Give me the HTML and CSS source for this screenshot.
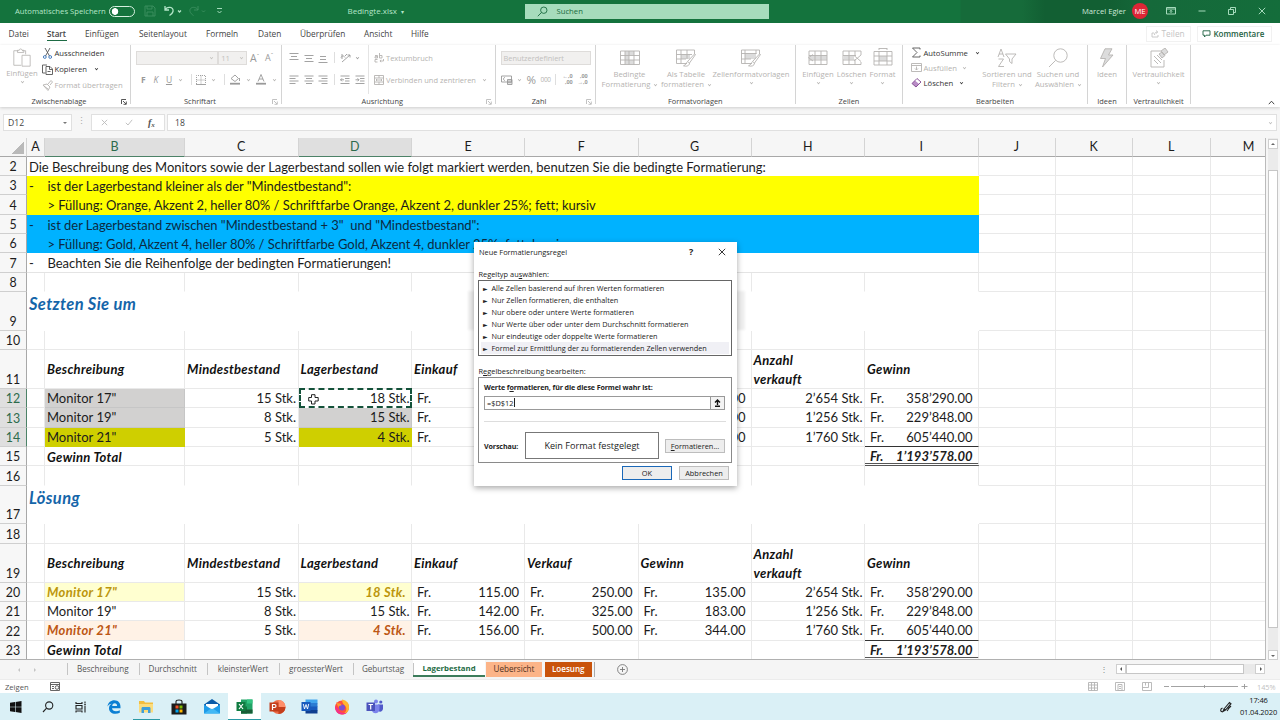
FILE: index.html
```html
<!DOCTYPE html>
<html lang="de">
<head>
    <meta charset="UTF-8">
    <meta name="viewport" content="width=device-width, initial-scale=1.0">
    <title>Bedingte.xlsx - Excel</title>
    <link rel="stylesheet" href="styles.css">
</head>
<body>
    <div class="titlebar">
        <span class="autosave">Automatisches Speichern</span>
        <span class="toggle"></span>
        <svg class="qa-save dim" width="12" height="12" viewBox="0 0 12 12"><path d="M1 1h8l2 2v8H1zM3 1v3h5V1M3 11V7h6v4"/></svg>
        <svg class="qa-undo" width="20" height="12" viewBox="0 0 20 12"><path d="M2 1v4h4M2 5c2-4 9-3.500 8 1.500C9.700 8 8 9.500 6.500 10.500M15 5.500l1.500 1.500L18 5.500"/></svg>
        <svg class="qa-redo dim" width="20" height="12" viewBox="0 0 20 12"><path d="M10 1v4H6M10 5C8 1 1 1.500 2 6.500c.3 1.500 2 3 3.500 4M14 5.500l1.500 1.500L17 5.500"/></svg>
        <svg class="qa-more" width="7" height="8" viewBox="0 0 7 8"><path d="M1 1.500h5M1.500 4l2 2 2-2"/></svg>
        <span class="doc-name">Bedingte.xlsx <small>▾</small></span>
        <div class="search">
            <svg width="11" height="11" viewBox="0 0 11 11"><circle cx="6.800" cy="4.200" r="3.200"/><path d="M4.500 6.500L.8 10.200"/></svg>
            <span>Suchen</span>
        </div>
        <span class="user">Marcel Egler</span>
        <span class="avatar">ME</span>
        <svg class="win-ribbon" width="10" height="8" viewBox="0 0 10 8"><path d="M.5.5h9v6.500h-9zM.5 2h9M5 6V3.500M3.800 4.500L5 3.300l1.200 1.200"/></svg>
        <svg class="win-min" width="8" height="8" viewBox="0 0 8 8"><path d="M.5 4h7"/></svg>
        <svg class="win-max" width="8" height="8" viewBox="0 0 8 8"><path d="M.5 2.500h5v5h-5zM2.500 2.500v-2h5v5h-2"/></svg>
        <svg class="win-close" width="8" height="8" viewBox="0 0 8 8"><path d="M.8.8l6.400 6.400M7.200.8L.8 7.200"/></svg>
    </div>

    <div class="menu">
        <span>Datei</span>
        <span class="current">Start</span>
        <span>Einfügen</span>
        <span>Seitenlayout</span>
        <span>Formeln</span>
        <span>Daten</span>
        <span>Überprüfen</span>
        <span>Ansicht</span>
        <span>Hilfe</span>
        <span class="share"><svg width="8" height="8" viewBox="0 0 8 8"><path d="M3 3H1v4h6V5M3.500 5c0-2 1-3 3-3M5 .5L6.800 2 5 3.500"/></svg>Teilen</span>
        <span class="comments"><svg width="9" height="8" viewBox="0 0 9 8"><path d="M1 .8h7v4.400H4L2.500 7V5.200H1z"/></svg>Kommentare</span>
    </div>

    <div class="ribbon">
        <div class="group g-clip">
            <div class="tools">
                <div class="big off">
                    <svg width="22" height="22" viewBox="0 0 22 22"><path d="M7 3H2v16h8M15 7V3h-4M6 2.500h2c0-2 3-2 3 0h2v2.500H6zM11 8h9v12h-9z"/></svg>
                    <span>Einfügen</span><i class="chev"></i>
                </div>
                <div class="stack">
                    <div class="cmd"><svg class="blue" width="11" height="11" viewBox="0 0 11 11"><path class="dark" d="M3 0l4.500 8M8 0L3.500 8"/><circle cx="2.800" cy="9" r="1.400"/><circle cx="8.200" cy="9" r="1.400"/></svg>Ausschneiden</div>
                    <div class="cmd"><svg width="11" height="11" viewBox="0 0 11 11"><path class="dark" d="M3.500 9H.5V1H5M4 2.500h4l2.500 2.500v5.500H4zM7.500 2.500V5.500h3M5.500 7.500h3"/></svg>Kopieren<i class="chev wide"></i></div>
                    <div class="cmd off"><svg width="11" height="11" viewBox="0 0 11 11"><path d="M1 5l4-1 3 3-2 3.500zM6 4l3-3.500 1.500 1.500L8 5M2 6l4 3"/></svg>Format übertragen</div>
                </div>
            </div>
            <div class="label">Zwischenablage<svg class="launch" width="6" height="6" viewBox="0 0 6 6"><path d="M.5 5V.5H5M2 2l3 3M5.300 2.500v2.800H2.500"/></svg></div>
        </div>

        <div class="group g-font off">
            <div class="tools column">
                <div class="line">
                    <span class="select font-name"><i class="chev"></i></span><span class="select font-size">11<i class="chev"></i></span>
                    <span class="grow">A<sup>ˆ</sup></span><span class="shrink">A<sup>ˇ</sup></span>
                </div>
                <div class="line second">
                    <b class="fmt">F</b><em class="fmt">K</em><u class="fmt">U</u><i class="chev"></i><i class="bar"></i>
                    <svg width="10" height="10" viewBox="0 0 10 10"><path stroke-dasharray="1 1" d="M.5 9V.5h9V9M5 .5V9M.5 5h9"/><path d="M0 9.500h10"/></svg><i class="chev"></i><i class="bar"></i>
                    <svg width="12" height="11" viewBox="0 0 12 11"><path d="M2 4.500L6 1l3.500 3.500L6 7.500zM10.500 4v3"/><path class="thick" d="M1 9.700h10"/></svg><i class="chev"></i>
                    <svg width="12" height="11" viewBox="0 0 12 11"><path d="M3 7.500L6 .5l3 7M4 5h4"/><path class="thick" d="M1 9.700h10"/></svg><i class="chev"></i>
                </div>
            </div>
            <div class="label">Schriftart<svg class="launch" width="6" height="6" viewBox="0 0 6 6"><path d="M.5 5V.5H5M2 2l3 3M5.300 2.500v2.800H2.500"/></svg></div>
        </div>

        <div class="group g-align off">
            <div class="tools">
                <div class="align-left">
                    <div class="line">
                        <svg width="10" height="10" viewBox="0 0 10 10"><path d="M.5.5h9M2 3.500h6M.5 6.500h9"/></svg>
                        <svg width="10" height="10" viewBox="0 0 10 10"><path d="M.5 2.500h9M2 5.500h6M.5 8.500h9"/></svg>
                        <svg width="10" height="10" viewBox="0 0 10 10"><path d="M2 3.500h6M2 6.500h6M.5 9.500h9"/></svg>
                        <i class="bar"></i>
                        <svg width="11" height="10" viewBox="0 0 11 10"><path d="M2 9l8-7M7.500 2H10v2.500"/><path d="M1 4.500l2-2 2 2M2 1v5M5 3l2-2"/></svg><i class="chev"></i>
                    </div>
                    <div class="line second">
                        <svg width="10" height="10" viewBox="0 0 10 10"><path d="M.5 1h9M.5 3.500h6M.5 6h9M.5 8.500h6"/></svg>
                        <svg width="10" height="10" viewBox="0 0 10 10"><path d="M.5 1h9M2 3.500h6M.5 6h9M2 8.500h6"/></svg>
                        <svg width="10" height="10" viewBox="0 0 10 10"><path d="M.5 1h9M3.500 3.500h6M.5 6h9M3.500 8.500h6"/></svg>
                        <i class="bar"></i>
                        <svg width="10" height="10" viewBox="0 0 10 10"><path d="M.5 1h9M5 3.500h4.500M5 6h4.500M.5 8.500h9M4 4.800H.5M2 3.300L.5 4.800 2 6.300"/></svg>
                        <svg width="10" height="10" viewBox="0 0 10 10"><path d="M.5 1h9M5 3.500h4.500M5 6h4.500M.5 8.500h9M4 4.800H.5M2.500 3.300L4 4.800 2.500 6.300"/></svg>
                    </div>
                </div>
                <div class="align-right">
                    <div class="line"><svg width="10" height="10" viewBox="0 0 10 10"><path d="M1 2.500h2.500V5H1V3.700h2.500M5.500 0v5H8V2.500H5.500M3.500 6.500H1V9h2.500M6 8h3.500V6M7 6.800L6 8l1 1.200"/></svg>Textumbruch</div>
                    <div class="line second"><svg width="10" height="10" viewBox="0 0 10 10"><path d="M.5.5h9v9h-9zM.5 3h9M.5 7h9M5 .5V3M5 7v2.500M2 5h6M3 4L2 5l1 1M7 4l1 1-1 1"/></svg>Verbinden und zentrieren<i class="chev wide"></i></div>
                </div>
            </div>
            <div class="label">Ausrichtung<svg class="launch" width="6" height="6" viewBox="0 0 6 6"><path d="M.5 5V.5H5M2 2l3 3M5.300 2.500v2.800H2.500"/></svg></div>
        </div>

        <div class="group g-num off">
            <div class="tools column">
                <div class="line"><span class="select number">Benutzerdefiniert</span></div>
                <div class="line second">
                    <svg width="12" height="10" viewBox="0 0 12 10"><path d="M.5 1h10v6H.5zM4 2.500c-2 0-2 3 0 3M6.500 4.500h4.500v5H6.500zM6.500 6h4.500M6.500 7.800h4.500"/></svg><i class="chev"></i>
                    <span class="percent">%</span><span class="thousand">000</span><i class="bar"></i>
                    <span class="decimal">←,0<br>,00</span><span class="decimal">,00<br>→,0</span>
                </div>
            </div>
            <div class="label">Zahl<svg class="launch" width="6" height="6" viewBox="0 0 6 6"><path d="M.5 5V.5H5M2 2l3 3M5.300 2.500v2.800H2.500"/></svg></div>
        </div>

        <div class="group g-styles off">
            <div class="tools">
                <div class="big w1">
                    <svg width="20" height="18" viewBox="0 0 20 18"><path class="fill" d="M5 2h9v4H5zM5 6h4v5H5zM5 11h9v4H5z"/><path d="M.5 2h19v13.500H.5zM.5 6.500h19M.5 11h19M5 2v13.500M9 2v13.500M14 2v13.500"/></svg>
                    <span>Bedingte<br>Formatierung<i class="chev"></i></span>
                </div>
                <div class="big w2">
                    <svg width="22" height="20" viewBox="0 0 22 20"><path class="fill" d="M6 6h9v5H6z"/><path d="M12 15.500H1.500V2h18v4M1.500 6.500H17M1.500 11H11M6 2v13.500M12 2v9M20.500 6.500l-6 8.500-2-1.500 7-7.500zM12.500 14c-2 .5-1 3-4 3.800 3 1 6 0 6-2.800"/></svg>
                    <span>Als Tabelle<br>formatieren<i class="chev"></i></span>
                </div>
                <div class="big w3">
                    <svg width="22" height="20" viewBox="0 0 22 20"><path class="fill" d="M5 5h11v6H5z"/><path d="M12 15.500H1.500V2h18v4M1.500 5.500h15M5 2v13.500M16 2v4M1.500 11H11M20.500 6.500l-6 8.500-2-1.500 7-7.500zM12.500 14c-2 .5-1 3-4 3.800 3 1 6 0 6-2.800"/></svg>
                    <span>Zellenformatvorlagen</span><i class="chev"></i>
                </div>
            </div>
            <div class="label">Formatvorlagen</div>
        </div>

        <div class="group g-cells off">
            <div class="tools">
                <div class="big w4">
                    <svg width="22" height="18" viewBox="0 0 22 18"><path class="fill" d="M3 6.500h17v4H3z"/><path d="M2 2h18v13.500H2zM2 6.500h18M2 11h18M8 2v13.500M14 2v13.500M6 5.500L1.500 8.700 6 12"/></svg>
                    <span>Einfügen</span><i class="chev"></i>
                </div>
                <div class="big w5">
                    <svg width="22" height="18" viewBox="0 0 22 18"><path class="fill" d="M3 6.500h10v4H3z"/><path d="M20 6V2H2v13.500h18V13M2 6.500h13M2 11h13M8 2v13.500M14 2v4M14 12v3.500M13 6.500l7 6M20 6l-7 6"/></svg>
                    <span>Löschen</span><i class="chev"></i>
                </div>
                <div class="big w6">
                    <svg width="20" height="20" viewBox="0 0 20 20"><path class="fill" d="M6 8h8v5H6z"/><path d="M1 3.500h18V17H1zM1 8h18M1 13h18M6 3.500V17M14 3.500V17M6 .5h8M6 0v2M14 0v2"/></svg>
                    <span>Format</span><i class="chev"></i>
                </div>
            </div>
            <div class="label">Zellen</div>
        </div>

        <div class="group g-edit">
            <div class="tools">
                <div class="stack">
                    <div class="cmd"><svg width="11" height="11" viewBox="0 0 11 11"><path class="dark" d="M9 2.500V1H1.500L6 5.500 1.500 10H9V8.500"/></svg>AutoSumme<i class="chev wide"></i></div>
                    <div class="cmd off"><svg width="11" height="9" viewBox="0 0 11 9"><path d="M.5.5h10v8H.5zM.5 2.500h10M5.500 3.500V7M4 5.500L5.500 7 7 5.500"/></svg>Ausfüllen<i class="chev"></i></div>
                    <div class="cmd"><svg width="11" height="10" viewBox="0 0 11 10"><path class="purple" d="M1 5.500l3-3L8 6 5 9z"/><path class="purple-line" d="M1 5.500L6 .5 10 4 5 9z"/></svg>Löschen<i class="chev"></i></div>
                </div>
                <div class="big w7 off">
                    <svg width="20" height="20" viewBox="0 0 20 20"><path d="M1 9l3-8 3 8M2 6h4M1.500 11h5l-5 7.500h5.500M8.500 6h10.500l-4 5v4.500l-2.500-2V11z"/></svg>
                    <span>Sortieren und<br>Filtern<i class="chev"></i></span>
                </div>
                <div class="big w8 off">
                    <svg width="20" height="20" viewBox="0 0 20 20"><circle cx="12.500" cy="7.500" r="6.700"/><path d="M7.700 12.300L1 19"/></svg>
                    <span>Suchen und<br>Auswählen<i class="chev"></i></span>
                </div>
            </div>
            <div class="label">Bearbeiten</div>
        </div>

        <div class="group g-ideas off">
            <div class="tools">
                <div class="big">
                    <svg width="18" height="20" viewBox="0 0 18 20"><path class="fill outline" d="M7 .8h7L10.500 7H15L4.500 19l3-8.500H2.500z"/></svg>
                    <span>Ideen</span>
                </div>
            </div>
            <div class="label">Ideen</div>
        </div>

        <div class="group g-trust off">
            <div class="tools">
                <div class="big">
                    <svg width="20" height="20" viewBox="0 0 20 20"><path d="M12 3H2v16h13v-7"/><path class="fill outline" d="M12 3l4-3 3 4-4 3zM10 6l3-2 3 3.500-3 2.500z"/><path class="hatch" d="M5 8l7 7M5 12l4 4M8 7l5 5"/></svg>
                    <span>Vertraulichkeit</span><i class="chev"></i>
                </div>
            </div>
            <div class="label">Vertraulichkeit</div>
        </div>
        <svg class="collapse" width="7" height="5" viewBox="0 0 7 5"><path d="M.8 4.200l2.700-3 2.700 3"/></svg>
    </div>

    <div class="formula-bar">
        <div class="name-box"><span>D12</span><i class="tri"></i></div>
        <i class="grip">⋮</i>
        <div class="formula-buttons">
            <svg width="7" height="7" viewBox="0 0 7 7"><path d="M.8.8l5.400 5.400M6.200.8L.8 6.200"/></svg>
            <svg width="8" height="7" viewBox="0 0 8 7"><path d="M.8 3.800L3 6 7.200.8"/></svg>
            <span class="fx">f<sub>x</sub></span>
        </div>
        <div class="formula-input"><span>18</span><i class="chev"></i></div>
    </div>

    <div class="workarea">
        <div class="sheet">
            <div class="head corner"></div><div class="head">A</div><div class="head sel">B</div><div class="head">C</div><div class="head sel">D</div><div class="head">E</div><div class="head">F</div><div class="head">G</div><div class="head">H</div><div class="head">I</div><div class="head">J</div><div class="head">K</div><div class="head">L</div><div class="head">M</div>

            <div class="row">2</div><div class="wide-cell">Die Beschreibung des Monitors sowie der Lagerbestand sollen wie folgt markiert werden, benutzen Sie die bedingte Formatierung:</div><div></div><div></div><div></div><div></div>
            <div class="row">3</div><div class="wide-cell yellow"><span class="dash">-</span>ist der Lagerbestand kleiner als der "Mindestbestand":</div><div></div><div></div><div></div><div></div>
            <div class="row">4</div><div class="wide-cell yellow"><span class="dash"></span>&gt; Füllung: Orange, Akzent 2, heller 80% / Schriftfarbe Orange, Akzent 2, dunkler 25%; fett; kursiv</div><div></div><div></div><div></div><div></div>
            <div class="row">5</div><div class="wide-cell sky"><span class="dash">-</span>ist der Lagerbestand zwischen "Mindestbestand + 3"&nbsp; und "Mindestbestand":</div><div></div><div></div><div></div><div></div>
            <div class="row">6</div><div class="wide-cell sky"><span class="dash"></span>&gt; Füllung: Gold, Akzent 4, heller 80% / Schriftfarbe Gold, Akzent 4, dunkler 25%; fett; kursiv</div><div></div><div></div><div></div><div></div>
            <div class="row">7</div><div class="wide-cell line-below"><span class="dash">-</span>Beachten Sie die Reihenfolge der bedingten Formatierungen!</div><div></div><div></div><div></div><div></div>
            <div class="row">8</div><div class="open"></div><div class="open"></div><div class="open"></div><div class="open"></div><div class="open"></div><div class="open"></div><div class="open"></div><div class="open"></div><div class="open"></div><div></div><div></div><div></div><div></div>
            <div class="row">9</div><div class="wide-cell title">Setzten Sie um</div><div></div><div></div><div></div><div></div>
            <div class="row">10</div><div></div><div></div><div></div><div></div><div></div><div></div><div></div><div></div><div></div><div></div><div></div><div></div><div></div>
            <div class="row">11</div><div></div><div class="th">Beschreibung</div><div class="th">Mindestbestand</div><div class="th">Lagerbestand</div><div class="th">Einkauf</div><div class="th">Verkauf</div><div class="th">Gewinn</div><div class="th">Anzahl<br>verkauft</div><div class="th">Gewinn</div><div></div><div></div><div></div><div></div>
            <div class="row sel">12</div><div></div><div class="gray">Monitor 17"</div><div class="num">15 Stk.</div><div class="num copied">18 Stk.<svg class="cursor" width="11" height="11" viewBox="0 0 11 11"><path d="M3.500.7h3.500v2.800h3.200v3.500H7v3H3.500V7H.7V3.500h2.800z"/></svg></div><div class="money"><span>Fr.</span><span>115.00</span></div><div class="money"><span>Fr.</span><span>250.00</span></div><div class="money"><span>Fr.</span><span>135.00</span></div><div class="num">2’654 Stk.</div><div class="money"><span>Fr.</span><span>358’290.00</span></div><div></div><div></div><div></div><div></div>
            <div class="row sel">13</div><div></div><div class="gray">Monitor 19"</div><div class="num">8 Stk.</div><div class="num gray">15 Stk.</div><div class="money"><span>Fr.</span><span>142.00</span></div><div class="money"><span>Fr.</span><span>325.00</span></div><div class="money"><span>Fr.</span><span>183.00</span></div><div class="num">1’256 Stk.</div><div class="money"><span>Fr.</span><span>229’848.00</span></div><div></div><div></div><div></div><div></div>
            <div class="row sel">14</div><div></div><div class="olive">Monitor 21"</div><div class="num">5 Stk.</div><div class="num olive">4 Stk.</div><div class="money"><span>Fr.</span><span>156.00</span></div><div class="money"><span>Fr.</span><span>500.00</span></div><div class="money"><span>Fr.</span><span>344.00</span></div><div class="num">1’760 Stk.</div><div class="money sum-above"><span>Fr.</span><span>605’440.00</span></div><div></div><div></div><div></div><div></div>
            <div class="row">15</div><div></div><div class="th">Gewinn Total</div><div></div><div></div><div></div><div></div><div></div><div></div><div class="money total"><span>Fr.</span><span>1’193’578.00</span></div><div></div><div></div><div></div><div></div>
            <div class="row">16</div><div class="open"></div><div class="open"></div><div class="open"></div><div class="open"></div><div class="open"></div><div class="open"></div><div class="open"></div><div class="open"></div><div class="open"></div><div></div><div></div><div></div><div></div>
            <div class="row">17</div><div class="wide-cell title">Lösung</div><div></div><div></div><div></div><div></div>
            <div class="row">18</div><div></div><div></div><div></div><div></div><div></div><div></div><div></div><div></div><div></div><div></div><div></div><div></div><div></div>
            <div class="row">19</div><div></div><div class="th">Beschreibung</div><div class="th">Mindestbestand</div><div class="th">Lagerbestand</div><div class="th">Einkauf</div><div class="th">Verkauf</div><div class="th">Gewinn</div><div class="th">Anzahl<br>verkauft</div><div class="th">Gewinn</div><div></div><div></div><div></div><div></div>
            <div class="row">20</div><div></div><div class="gold">Monitor 17"</div><div class="num">15 Stk.</div><div class="num gold">18 Stk.</div><div class="money"><span>Fr.</span><span>115.00</span></div><div class="money"><span>Fr.</span><span>250.00</span></div><div class="money"><span>Fr.</span><span>135.00</span></div><div class="num">2’654 Stk.</div><div class="money"><span>Fr.</span><span>358’290.00</span></div><div></div><div></div><div></div><div></div>
            <div class="row">21</div><div></div><div>Monitor 19"</div><div class="num">8 Stk.</div><div class="num">15 Stk.</div><div class="money"><span>Fr.</span><span>142.00</span></div><div class="money"><span>Fr.</span><span>325.00</span></div><div class="money"><span>Fr.</span><span>183.00</span></div><div class="num">1’256 Stk.</div><div class="money"><span>Fr.</span><span>229’848.00</span></div><div></div><div></div><div></div><div></div>
            <div class="row">22</div><div></div><div class="orange">Monitor 21"</div><div class="num">5 Stk.</div><div class="num orange">4 Stk.</div><div class="money"><span>Fr.</span><span>156.00</span></div><div class="money"><span>Fr.</span><span>500.00</span></div><div class="money"><span>Fr.</span><span>344.00</span></div><div class="num">1’760 Stk.</div><div class="money sum-above"><span>Fr.</span><span>605’440.00</span></div><div></div><div></div><div></div><div></div>
            <div class="row">23</div><div></div><div class="th">Gewinn Total</div><div></div><div></div><div></div><div></div><div></div><div></div><div class="money total"><span>Fr.</span><span>1’193’578.00</span></div><div></div><div></div><div></div><div></div>
        </div>
        <div class="vscroll">
            <i class="arrow up"></i>
            <i class="thumb"></i>
            <i class="arrow down"></i>
        </div>
    </div>

    <div class="tabs">
        <span class="nav"><i class="tri-left"></i><i class="tri-right"></i></span>
        <span class="tab">Beschreibung</span>
        <span class="tab">Durchschnitt</span>
        <span class="tab">kleinsterWert</span>
        <span class="tab">groessterWert</span>
        <span class="tab">Geburtstag</span>
        <span class="tab active">Lagerbestand</span>
        <span class="tab peach">Uebersicht</span>
        <span class="tab rust">Loesung</span>
        <span class="add"><svg width="11" height="11" viewBox="0 0 11 11"><circle cx="5.500" cy="5.500" r="4.900"/><path d="M5.500 3v5M3 5.500h5"/></svg></span>
        <span class="split">⋮</span>
        <div class="hscroll"><i class="arrow left"></i><i class="thumb"></i><i class="arrow right"></i></div>
    </div>

    <div class="status">
        <span class="mode">Zeigen</span>
        <svg width="10" height="9" viewBox="0 0 10 9"><path class="dark" d="M.5.5h9v8h-9zM.5 2.500h9M2 4.500h2M2 6.500h2"/><circle class="dark" cx="7" cy="5.500" r="1.800"/></svg>
        <div class="views">
            <svg width="10" height="9" viewBox="0 0 10 9"><path d="M.5.5h9v8h-9zM.5 3h9M.5 6h9M3.500.5v8M6.500.5v8"/></svg>
            <svg width="10" height="9" viewBox="0 0 10 9"><path d="M.5.5h9v8h-9zM3 2.500h4v6H3zM4 4.500h2M4 6.500h2"/></svg>
            <svg width="10" height="9" viewBox="0 0 10 9"><path d="M.5.5h9v8h-9zM.5 5.500h6v-5M3.500.5v3"/></svg>
        </div>
        <svg class="zoom" width="87" height="9" viewBox="0 0 87 9"><path d="M1 4.500h5M8 4.500h67M41.500 3v3M78.500 4.500h6M81.500 2v5"/></svg>
        <span class="percentage">145%</span>
    </div>

    <div class="taskbar">
        <svg width="12" height="12" viewBox="0 0 12 12"><path fill="#111" d="M0 1.800l5-.8v4.700H0zM5.600.9L11.500 0v5.700H5.600zM0 6.300h5V11l-5-.8zM5.600 6.300h5.900V12l-5.900-.9z"/></svg>
        <svg width="12" height="12" viewBox="0 0 12 12"><circle class="stroke" cx="7.200" cy="4.500" r="3.600"/><path class="stroke" d="M4.600 7.200L1 11"/></svg>
        <svg width="12" height="12" viewBox="0 0 12 12"><path class="stroke" d="M1 1v1.500h6V1M1 4.500h6v3.500H1zM1 11.500V10h6v1.500M10 .5v2M10 5v6.500M9 3.700h2"/></svg>
        <svg width="14" height="14" viewBox="0 0 14 14"><path fill="#0b7fd3" d="M.5 6.500C1 2.500 4 .3 7.300.3c4 0 6.200 2.800 6.200 6.700v1.300H5c.2 2 1.800 2.900 4 2.900 1.500 0 2.700-.4 3.800-1v2.600c-1.200.7-2.700 1-4.400 1-3.700 0-6.400-2-6.400-5.500C2 6.200 3 4.600 4.800 3.700 2.800 3.800 1.300 5 .5 6.500zM5.200 6h4.900c0-1.700-.9-2.700-2.400-2.700S5.400 4.300 5.200 6z"/></svg>
        <span class="app running"><svg width="16" height="13" viewBox="0 0 16 13"><path fill="#f2bd3f" d="M1 1h5l1 1.500h8V12H1z"/><path fill="#fbdc7c" d="M1 4h14v8.500H1z"/><path fill="#3d9edb" d="M3.500 13V8.500c0-1 .5-1.500 1.500-1.500h6c1 0 1.500.5 1.500 1.500V13H10v-3H6v3z"/></svg></span>
        <svg width="16" height="16" viewBox="0 0 16 16"><path class="stroke" d="M5 5V2.500C5 .5 11 .5 11 2.500V5"/><path fill="#1b1b1b" d="M.5 4.500h15v11H.5z"/><path fill="#f05024" d="M4.500 6.500h3v3h-3z"/><path fill="#7fb900" d="M8.500 6.500h3v3h-3z"/><path fill="#00a3ee" d="M4.500 10.500h3v3h-3z"/><path fill="#ffb800" d="M8.500 10.500h3v3h-3z"/></svg>
        <svg width="16" height="15" viewBox="0 0 16 15"><path fill="#0a5aa8" d="M0 5.500L8 0l8 5.500V9H0z"/><path fill="#fff" d="M2 5h12v5H2z"/><path fill="#1e9be8" d="M0 5.500l8 5 8-5V14.500H0z"/><path fill="#42b8f5" d="M0 14.500l7-5 1 .7 1-.7 7 5z"/></svg>
        <span class="app focused"><svg width="17" height="15" viewBox="0 0 17 15"><path fill="#21a366" d="M5 .5h11.500v14H5z"/><path fill="#107c41" d="M5 7.500h6v7H5z"/><path fill="#185c37" d="M5 10.500h11.500v4H5z"/><path fill="#33c481" d="M11 .5h5.500v4H11z"/><path fill="#107c41" d="M.5 3h9v9h-9z"/><path stroke="#fff" stroke-width="1.200" d="M3 5l4 5M7 5l-4 5"/></svg></span>
        <svg width="17" height="16" viewBox="0 0 17 16"><circle cx="9.500" cy="8" r="7" fill="#ed6c47"/><path fill="#ff8f6b" d="M9.500 1a7 7 0 0 1 7 7h-7z"/><path fill="#c43e1c" d="M.5 3.500h9v9h-9zM9.500 8h7a7 7 0 0 1-7 7z"/><path stroke="#fff" stroke-width="1.200" fill="none" d="M3.500 11V5.500h2c2 0 2 3 0 3h-2"/></svg>
        <svg width="17" height="15" viewBox="0 0 17 15"><path fill="#41a5ee" d="M4.500.5h12v4h-12z"/><path fill="#2b7cd3" d="M4.500 4h12v4h-12z"/><path fill="#185abd" d="M4.500 7.500h12v4h-12z"/><path fill="#103f91" d="M4.500 11h12v3.500h-12z"/><path fill="#185abd" d="M.5 3h9v9h-9z"/><path stroke="#fff" fill="none" d="M2.300 5l1.200 5L5 5.500 6.500 10l1.200-5"/></svg>
        <svg width="16" height="16" viewBox="0 0 16 16"><circle cx="8" cy="8.500" r="7" fill="#ff4f3d"/><path fill="#ffb52e" d="M8 .5c5 1 7.500 4 7 8.500-.5 4-3.500 6.500-7 6.500 4-2 5-4.500 4-7.500C11 6 8 5 8 .5z"/><path fill="#f3318b" d="M1 7c0 5 3 8.500 7 8.500 2.500 0 4-1 5-2-4 1.500-8 0-9-4z"/><circle cx="8" cy="8.500" r="3" fill="#7a4fd0"/><path fill="#ff9b2e" d="M2 3l2 1.500C6 4 7 5 7.500 6.500c-2-.2-3 .5-3 2z"/></svg>
        <svg width="18" height="15" viewBox="0 0 18 15"><circle cx="10" cy="2.500" r="2" fill="#7b83eb"/><circle cx="14.800" cy="3" r="1.600" fill="#5059c9"/><path fill="#5059c9" d="M12 5.500h5v4c0 2.500-2 3.500-4 3z"/><path fill="#7b83eb" d="M6 5.500h7.500V10c0 5.500-7.500 5.500-7.500 1z"/><path fill="#4b53bc" d="M.5 3.500h8.500V12H.5z"/><path stroke="#fff" stroke-width="1.200" d="M2.500 5.500H7M4.700 5.500v5"/></svg>
        <span></span>
        <svg width="12" height="12" viewBox="0 0 12 12"><path class="stroke" d="M4 8l5.500-6.500 1.500 1.200L5.500 9zM4 8L3 10.500 5.500 9M2.500 7C0 8 0 11 3 10.800M8 8l3-3M7 10l1.500-2"/></svg>
        <div class="clock">17:46<br>01.04.2020</div>
    </div>

    <div class="ghost"></div>
    <div class="dialog">
        <div class="dialog-title"><span>Neue Formatierungsregel</span><b>?</b><svg width="8" height="8" viewBox="0 0 8 8"><path d="M.8.8l6.400 6.400M7.200.8L.8 7.200"/></svg></div>
        <div class="caption">Regeltyp au<u>s</u>wählen:</div>
        <ul class="rules">
            <li>Alle Zellen basierend auf ihren Werten formatieren</li>
            <li>Nur Zellen formatieren, die enthalten</li>
            <li>Nur obere oder untere Werte formatieren</li>
            <li>Nur Werte über oder unter dem Durchschnitt formatieren</li>
            <li>Nur eindeutige oder doppelte Werte formatieren</li>
            <li class="chosen">Formel zur Ermittlung der zu formatierenden Zellen verwenden</li>
        </ul>
        <div class="caption edit">R<u>e</u>gelbeschreibung bearbeiten:</div>
        <div class="description">
            <b class="hint">Werte f<u>o</u>rmatieren, für die diese Formel wahr ist:</b>
            <div class="ref-input"><span>=$D$12</span><i class="ref-button"><svg width="7" height="8" viewBox="0 0 7 8"><path d="M3.500 6V1M1 3.500L3.500 1 6 3.500M1 7.300h5"/></svg></i></div>
            <div class="preview">
                <b>Vorschau:</b>
                <div class="preview-box">Kein Format festgelegt</div>
                <span class="button"><u>F</u>ormatieren...</span>
            </div>
        </div>
        <div class="dialog-buttons"><span class="button ok">OK</span><span class="button">Abbrechen</span></div>
    </div>
</body>
</html>
```

FILE: styles.css
```css
* {
    margin: 0;
    padding: 0;
    box-sizing: border-box;
}

body {
    width: 1280px;
    height: 720px;
    overflow: hidden;
    display: flex;
    flex-direction: column;
    position: relative;
    background: #f6f6f6;
    color: #444;
    font-family: "Open Sans", "Noto Sans", sans-serif;
    font-size: 7.7px;
    line-height: 10px;
    white-space: nowrap;
}

svg {
    display: block;
    flex: none;
    fill: none;
    stroke: currentColor;
    stroke-width: 0.9;
}

i {
    font-style: normal;
}

/* Title bar */
.titlebar {
    height: 22.5px;
    flex: none;
    display: flex;
    align-items: center;
    padding-left: 15px;
    background: linear-gradient(90deg, #14733d 0, #14733d 960px, #166b3a 961px, #166b3a 1022px, #125f33 1045px, #125f33 1110px, #15693a 1150px, #146d3b 100%);
    color: #b4e6c9;
}

.autosave {
    width: 94px;
}

.toggle {
    width: 26px;
    height: 11px;
    border: 1px solid #d5f0df;
    border-radius: 6px;
    background: radial-gradient(circle at 5px 4.5px, #fff 3px, transparent 3.6px);
}

.dim { opacity: 0.25; }
.qa-save { margin-left: 9px; }
.qa-undo { margin-left: 7px; stroke-width: 1.3; }
.qa-redo { margin-left: 5px; }
.qa-more { margin-left: 8px; }

.doc-name {
    margin-left: 124.5px;
    width: 177px;
    font-size: 8px;
}

.doc-name small {
    margin-left: 2px;
    font-size: 6px;
}

.search {
    width: 244.5px;
    height: 15px;
    display: flex;
    align-items: center;
    gap: 9px;
    padding-left: 12px;
    background: #a6dcbc;
    color: #1b6b40;
}

.user {
    margin: 0 6px 0 307px;
    width: 50px;
    text-align: right;
    color: #cfe9da;
}

.avatar {
    width: 16px;
    height: 16px;
    line-height: 16px;
    border-radius: 8px;
    background: #dc2636;
    color: #fff;
    text-align: center;
}

.win-ribbon { margin-left: 18px; }
.win-min { margin-left: 22px; }
.win-max { margin-left: 22px; }
.win-close { margin-left: 22px; }

/* Menu */
.menu {
    height: 22.5px;
    flex: none;
    display: grid;
    grid-template-columns: 38.5px 38px 54px 67px 52px 42px 64px 47px 734.5px 51px 75px;
    align-items: center;
    padding-left: 8.5px;
    background: #fff;
    font-size: 8.3px;
}

.current {
    align-self: start;
    width: 20px;
    height: 18.5px;
    line-height: 21px;
    border-bottom: 1.5px solid #1d6b44;
    font-weight: 600;
    font-size: 8.1px;
}

.share,
.comments {
    display: flex;
    align-items: center;
    gap: 3px;
    height: 16px;
    width: 45px;
    padding-left: 4px;
    border: 1px solid #f1f1f1;
    color: #c4c4c4;
}

.comments {
    width: 75px;
    color: #1d6142;
    font-weight: 600;
    font-size: 8px;
}

/* Ribbon */
.ribbon {
    height: 62px;
    flex: none;
    display: flex;
    background: #fff;
    box-shadow: 0 1px 3px #ccc;
    position: relative;
}

.group {
    display: flex;
    flex-direction: column;
    height: 59px;
    border-right: 1px solid #d4d4d4;
}

.g-clip { width: 131px; }
.g-font { width: 151px; }
.g-align { width: 213.5px; }
.g-num { width: 100px; }
.g-styles { width: 200.5px; }
.g-cells { width: 107px; }
.g-edit { width: 185px; }
.g-ideas { width: 39px; }
.g-trust { width: 64px; }

.off {
    color: #b5b3b1;
}

.tools {
    height: 50.5px;
    flex: none;
    display: flex;
}

.tools.column {
    flex-direction: column;
}

.label {
    position: relative;
    color: #444;
    font-size: 7.4px;
    line-height: 11px;
    text-align: center;
}

.g-clip .label,
.g-font .label,
.g-align .label,
.g-num .label {
    padding-right: 12px;
}

.launch {
    position: absolute;
    right: 3px;
    top: 3px;
}

.off .launch { color: #bbb; }

.big {
    width: 40px;
    padding-top: 3px;
    display: flex;
    flex-direction: column;
    align-items: center;
    text-align: center;
    line-height: 10.5px;
}

.big svg {
    height: 20px;
    margin-bottom: 1.5px;
}

.fill {
    fill: #dcdcdc;
    stroke: none;
}

.outline { stroke: currentColor; }

.chev {
    flex: none;
    display: inline-block;
    width: 3px;
    height: 3px;
    margin: 0 4px 1px 5px;
    border-right: 0.8px solid currentColor;
    border-bottom: 0.8px solid currentColor;
    transform: rotate(45deg) scale(0.8);
}

.chev.wide { margin-left: 7px; }
.big .chev { margin-right: 0; margin-left: 4px; }
.big > .chev { margin: 2px 0 0; }

.stack {
    display: flex;
    flex-direction: column;
}

.cmd {
    height: 16px;
    display: flex;
    align-items: center;
    gap: 1.5px;
}

.g-clip .big { width: 42px; padding-left: 2px; }
.g-clip .big span { margin-top: -2px; }
.cmd:not(.off) { color: #333; }
.blue { stroke: #3571b5; }
.dark { stroke: #555; }
.purple { fill: #b98cc6; stroke: none; }
.purple-line { stroke: #80488f; }

.line {
    height: 20px;
    display: flex;
    align-items: center;
    padding-top: 5px;
}

.line.second {
    height: 23px;
    padding-top: 6px;
}

.select {
    height: 14px;
    display: flex;
    align-items: center;
    justify-content: flex-end;
    background: #f1f0ef;
    border: 1px solid #dedcda;
    color: #c2c0be;
}

.g-font .line { padding-left: 5px; }
.font-name { width: 82px; }
.font-size { width: 29px; }
.font-size .chev { margin: 0 3px 0 10px; }
.grow, .shrink { width: 15px; padding-left: 3px; font-size: 10.5px; color: #999; }
.shrink { font-size: 9px; }
.grow sup, .shrink sup { font-size: 6px; line-height: 4px; }
.fmt { width: 14.5px; padding-left: 5px; font-size: 8.5px; color: #999; }
.g-font .second .chev { margin: 0 5px 0 6px; }
.g-font .second .fmt + .chev { margin-left: 6px; }
.g-font .second svg { color: #999; }
.thick { stroke-width: 1.8; }

.bar {
    width: 1px;
    height: 11px;
    background: #dedede;
    margin: 0 4px;
}

.align-left {
    width: 87px;
    padding-left: 7px;
    height: 49px;
    border-right: 1px solid #e4e4e4;
}

.align-left .line { gap: 4.5px; color: #999; }
.align-left .bar { margin: 0 1px; }
.align-left .chev { margin: 0; }
.align-right { padding-left: 5px; }
.align-right .line { gap: 2px; font-size: 7.5px; }
.align-right .chev { margin-left: 5px; }

.g-num .line { padding-left: 5px; }
.number { width: 90px; justify-content: flex-start; padding-left: 2px; font-size: 7.4px; }
.g-num .chev { margin: 0 6px 0 5px; }
.percent { width: 14px; font-size: 11.5px; color: #999; }
.thousand { font-size: 6.5px; letter-spacing: -0.3px; }
.g-num .bar { margin: 0 2px 0 4px; }
.decimal { width: 15px; font-size: 5.5px; line-height: 5.5px; text-align: right; font-weight: bold; color: #999; }
.g-num .second svg { color: #999; }

.w1 { width: 60px; margin-left: 4px; }
.w2 { width: 53px; }
.w3 { width: 77px; }
.w4 { width: 36px; margin-left: 4px; }
.w5 { width: 31px; }
.w6 { width: 31px; }
.w7 { width: 56px; }
.w8 { width: 46px; }
.g-styles .big span, .g-cells .big span, .g-edit .big span, .g-ideas .big span, .g-trust .big span { margin-top: -1px; }
.g-edit .stack { width: 76px; padding-left: 8px; }
.g-edit .cmd { height: 15.3px; }
.g-trust .big { width: 63px; }

.collapse {
    margin: 55px 0 0 77px;
    color: #333;
}

/* Formula bar */
.formula-bar {
    height: 31px;
    flex: none;
    display: flex;
    padding: 7px 3px 7px;
    font-size: 8.6px;
    line-height: 15px;
}

.name-box, .formula-buttons, .formula-input {
    height: 17px;
    border: 1px solid #e0e0e0;
    background: #fff;
    display: flex;
    align-items: center;
}

.name-box {
    width: 69px;
    justify-content: space-between;
    padding: 1px 4px 0;
}

.tri {
    border: 2.5px solid transparent;
    border-top-color: #777;
    margin-top: 2px;
}

.grip {
    width: 19px;
    text-align: center;
    color: #aaa;
}

.formula-buttons {
    width: 74px;
    padding-left: 9px;
    gap: 17px;
    color: #bbb;
}

.fx {
    margin-left: -2px;
    font: italic bold 10px "Liberation Serif", serif;
    color: #555;
}

.fx sub { font-size: 7px; vertical-align: -1px; }

.formula-input {
    flex: 1;
    margin-left: 2px;
    justify-content: space-between;
    padding: 1px 0 0 7px;
}

.formula-input .chev { color: #bbb; }

/* Sheet */
.workarea {
    height: 522px;
    flex: none;
    display: flex;
}

.sheet {
    width: 1265.5px;
    display: grid;
    grid-template-columns: 27px 18px 140px 113.5px 113.5px 113px 113.5px 113px 113.5px 113.5px 77px 77.5px 77.5px 55px;
    grid-template-rows: 18.5px repeat(7, 19.35px) 38.8px 19.35px 38.8px repeat(5, 19.35px) 38.8px 19.35px 38.8px repeat(4, 19.35px);
    background: #fff;
    border-right: 1px solid #bbb;
    border-bottom: 1px solid #b0b0b0;
    font-family: Lato, "Open Sans", sans-serif;
    font-size: 13px;
    line-height: 19px;
    color: #1c1c1c;
    overflow: hidden;
}

.sheet > div {
    border-right: 1px solid #e9e9e9;
    border-bottom: 1px solid #e9e9e9;
    padding: 0 2px;
    min-width: 0;
}

.sheet > .head {
    background: #f6f6f6;
    border-right-color: #d4d4d4;
    border-bottom-color: #a8a8a8;
    padding: 0;
    text-align: center;
    font-size: 12.5px;
    line-height: 18px;
}

.sheet > .head:nth-child(14) { padding-left: 22px; }

.sheet > .head.sel {
    background: #dfdfdf;
    border-bottom: 1.5px solid #4c8267;
    color: #2c6b4c;
}

.sheet > .corner {
    background: linear-gradient(135deg, transparent 50%, #b9b9b9 50%) 11px 4px / 13px 12px no-repeat #f6f6f6;
}

.sheet > .row {
    display: flex;
    align-items: flex-end;
    justify-content: center;
    background: #f7f7f7;
    border-right-color: #a8a8a8;
    border-bottom-color: #cfcfcf;
    padding: 0;
    font-size: 12.4px;
    line-height: 17px;
}

.sheet > .row.sel {
    background: #dfdfdf;
    border-right: 1.5px solid #4c8267;
    color: #2c6b4c;
}

.sheet > .wide-cell {
    grid-column: 2 / 11;
    border-bottom-color: transparent;
    display: flex;
    padding-top: 1px;
    line-height: 18.5px;
    letter-spacing: -0.03px;
}

.dash { width: 18.5px; flex: none; }

.sheet > .yellow { background: #ff0; border-color: #ff0; letter-spacing: -0.04px; }
.sheet > .sky { background: #00b2ff; border-color: #00b2ff; color: #0c2a42; letter-spacing: -0.04px; }
.sheet > .line-below { border-bottom-color: #e4e4e4; }
.sheet > .open { border-bottom-color: transparent; }

.sheet > .title {
    padding-top: 3px;
    border-right-color: transparent;
    color: #1565a9;
    font-size: 16.500px;
    letter-spacing: 0.35px;
    font-weight: bold;
    font-style: italic;
}

.sheet > .th {
    display: flex;
    align-items: center;
    padding-top: 2px;
    font-weight: bold;
    font-style: italic;
    letter-spacing: 0.3px;
    color: #111;
}

.sheet > .num { text-align: right; padding-right: 1.5px; }

.sheet > .money {
    display: flex;
    justify-content: space-between;
    padding: 0 5px;
}

.sheet > .gray { background: #d2d1d0; border-color: #c6c6c6; }
.sheet > .olive { background: #cfcf00; border-color: #cfcf00; }
.sheet > .gold, .sheet > .orange { font-weight: bold; font-style: italic; letter-spacing: 0.3px; }
.sheet > .gold { background: #ffffd0; color: #bc960c; }
.sheet > .orange { background: #fff2e6; color: #bd5714; }
.sheet > .num.gold, .sheet > .num.orange { padding-right: 5px; }
.sheet > .sum-above { border-bottom-color: #333; }

.sheet > .total {
    font-weight: bold;
    font-style: italic;
    border-bottom: 3px double #555;
}

.sheet > .copied {
    position: relative;
    border-color: transparent;
}

.copied::after {
    content: "";
    position: absolute;
    inset: -1px -1px -1px 0;
    border: 2px dashed #14523a;
}

.cursor {
    position: absolute;
    left: 9.5px;
    top: 5px;
    fill: #fff;
    stroke: #222;
    stroke-width: 1;
}

.vscroll {
    width: 10px;
    margin-left: 2.5px;
    padding-top: 1px;
    display: flex;
    flex-direction: column;
    background: #ebebeb;
}

.arrow {
    flex: none;
    width: 10px;
    height: 10px;
    display: grid;
    place-items: center;
    background: #fff;
    border: 1px solid #cfcfcf;
}

.arrow::after {
    content: "";
    border: 2.5px solid transparent;
}

.up::after { border-bottom-color: #666; margin-top: -3px; }
.down::after { border-top-color: #666; margin-bottom: -3px; }
.left::after { border-right-color: #555; margin-left: -3px; }
.right::after { border-left-color: #555; margin-right: -3px; }

.thumb {
    background: #fff;
    border: 1px solid #c6c6c6;
}

.vscroll .thumb { margin: 21px 0 22px; height: 459px; }

/* Sheet tabs */
.tabs {
    height: 19px;
    flex: none;
    display: grid;
    grid-template-columns: 67px 71.5px 68.5px 72px 74px 60px 72px 60px 49px 61px 453px 172px;
    background: #f5f5f5;
    font-size: 8.1px;
    line-height: 17px;
    text-align: center;
    color: #555;
}

.nav {
    display: flex;
    align-items: center;
    gap: 14px;
    padding-left: 16px;
}

.tri-left { border: 2.5px solid transparent; border-right-color: #c4c4c4; }
.tri-right { border: 2.5px solid transparent; border-left-color: #c4c4c4; }

.tab {
    position: relative;
    height: 17px;
}

.tab::before {
    content: "";
    position: absolute;
    left: 0;
    top: 3px;
    height: 12px;
    border-left: 1px solid #c4c4c4;
}

.tab.active {
    background: #fff;
    border-bottom: 2px solid #3c7c5b;
    color: #1d6b44;
    font-weight: bold;
    font-size: 7.8px;
}

.tab.peach {
    margin: 1.5px 3px 0 1px;
    height: 15.5px;
    line-height: 14px;
    background: #fcb488;
    color: #4d3020;
}

.tab.rust {
    margin: 1.5px 2.5px 0 0;
    height: 15.5px;
    line-height: 14px;
    background: #c9530b;
    color: #fff;
    font-weight: 600;
}

.peach::before, .rust::before { display: none; }

.add {
    display: flex;
    align-items: center;
    padding-left: 22px;
    border-left: 1px solid #aaa;
    margin: 2px 0;
    color: #777;
}

.split {
    color: #888;
    text-align: right;
}

.hscroll {
    display: flex;
    height: 10px;
    width: 149px;
    margin: 4px 0 0 8px;
    background: #e9e9e9;
}

.hscroll .thumb { flex: 1; margin-right: 11px; }

/* Status bar */
.status {
    height: 14px;
    flex: none;
    display: flex;
    align-items: center;
    padding-left: 5px;
    background: #fff;
    font-size: 7.6px;
    color: #c2c2c2;
    border-top: 1px solid #ececec;
}

.mode { width: 45px; color: #555; }
.views { display: flex; gap: 17px; margin-left: 1028px; }
.views svg { color: #b3b3b3; }
.zoom { margin-left: 11px; color: #999; }
.percentage { margin-left: 7px; font-size: 7.3px; }

/* Taskbar */
.taskbar {
    height: 27px;
    flex: none;
    display: grid;
    grid-template-columns: 32px 32px 33px 33px 32.5px 33px 32.5px 33px 32px 33px 32.5px 33px 817px 34px 38px;
    align-items: center;
    justify-items: center;
    background: #daf0f6;
    color: #111;
}

.taskbar svg { stroke: none; }
.taskbar .stroke { fill: none; stroke: #222; stroke-width: 1.1; }

.app {
    height: 27px;
    width: 33px;
    display: grid;
    place-items: center;
}

.running { width: 27px; border-bottom: 1.5px solid #2a99a4; }
.focused { background: #fff; border-bottom: 1.5px solid #2a99a4; }

.clock {
    width: 38px;
    margin: -2px 6px 0 0;
    text-align: center;
    font-size: 7.5px;
    line-height: 12px;
    letter-spacing: -0.1px;
}

/* Dialog */
.ghost {
    position: absolute;
    left: 468px;
    top: 291px;
    width: 277px;
    height: 39px;
    background: #f0f0f0;
    filter: blur(1px);
}

.dialog {
    position: absolute;
    left: 474px;
    top: 242px;
    width: 263px;
    height: 244px;
    padding: 0 5px 0 4px;
    background: #fff;
    color: #222;
    box-shadow: 0 2px 6px rgba(0, 0, 0, 0.35);
    font-size: 7.4px;
}

.dialog-title {
    height: 20px;
    display: flex;
    align-items: center;
    padding-left: 1px;
}

.dialog-title span { width: 210px; }
.dialog-title b { width: 28.5px; font-size: 9px; }

.caption {
    padding: 7px 0 0 0.5px;
    height: 18px;
}

.rules {
    height: 76px;
    padding: 1px 2px;
    border: 1.5px solid #666;
    list-style: none;
    font-size: 7.3px;
}

.rules li {
    height: 12px;
    line-height: 12px;
}

.rules li::before {
    content: "►";
    display: inline-block;
    width: 8.5px;
    margin-left: 2px;
    font-family: "DejaVu Sans", sans-serif;
    font-size: 6px;
    line-height: 6px;
    vertical-align: 0.5px;
}

.rules .chosen { background: #f0f0f5; }

.caption.edit { padding-top: 10px; height: 20.5px; }

.description {
    height: 86.5px;
    border: 1px solid #8a8a8a;
    padding: 4px 5px 0;
}

.hint { display: block; font-size: 7.1px; letter-spacing: -0.1px; }

.ref-input {
    width: 241px;
    height: 14px;
    margin: 4px 0 11px;
    display: flex;
    justify-content: space-between;
    border: 1px solid #999;
    line-height: 12px;
    padding-left: 2px;
}

.ref-input span {
    height: 9px;
    line-height: 10px;
    margin-top: 1.5px;
    border-right: 1px solid #222;
}

.ref-button {
    width: 14px;
    display: grid;
    place-items: center;
    border-left: 1px solid #999;
    background: #f3f3f3;
    color: #111;
}

.ref-button svg { stroke-width: 1.4; }

.preview {
    display: flex;
    align-items: center;
    padding-top: 10.5px;
    border-top: 1px solid #ddd;
}

.preview b { width: 41px; font-size: 7.1px; letter-spacing: -0.1px; }

.preview-box {
    width: 134px;
    height: 27px;
    margin-right: 6px;
    border: 1px solid #777;
    line-height: 25px;
    text-align: center;
    font-size: 9.1px;
}

.button {
    width: 60px;
    height: 14px;
    border: 1px solid #bdbdbd;
    background: #ededed;
    line-height: 12px;
    text-align: center;
}

.dialog-buttons {
    display: flex;
    justify-content: flex-end;
    gap: 7px;
    padding: 3px 3px 0 0;
}

.dialog-buttons .button { width: 50px; }
.dialog-buttons .ok { border: 1.5px solid #1a68b8; }
```
